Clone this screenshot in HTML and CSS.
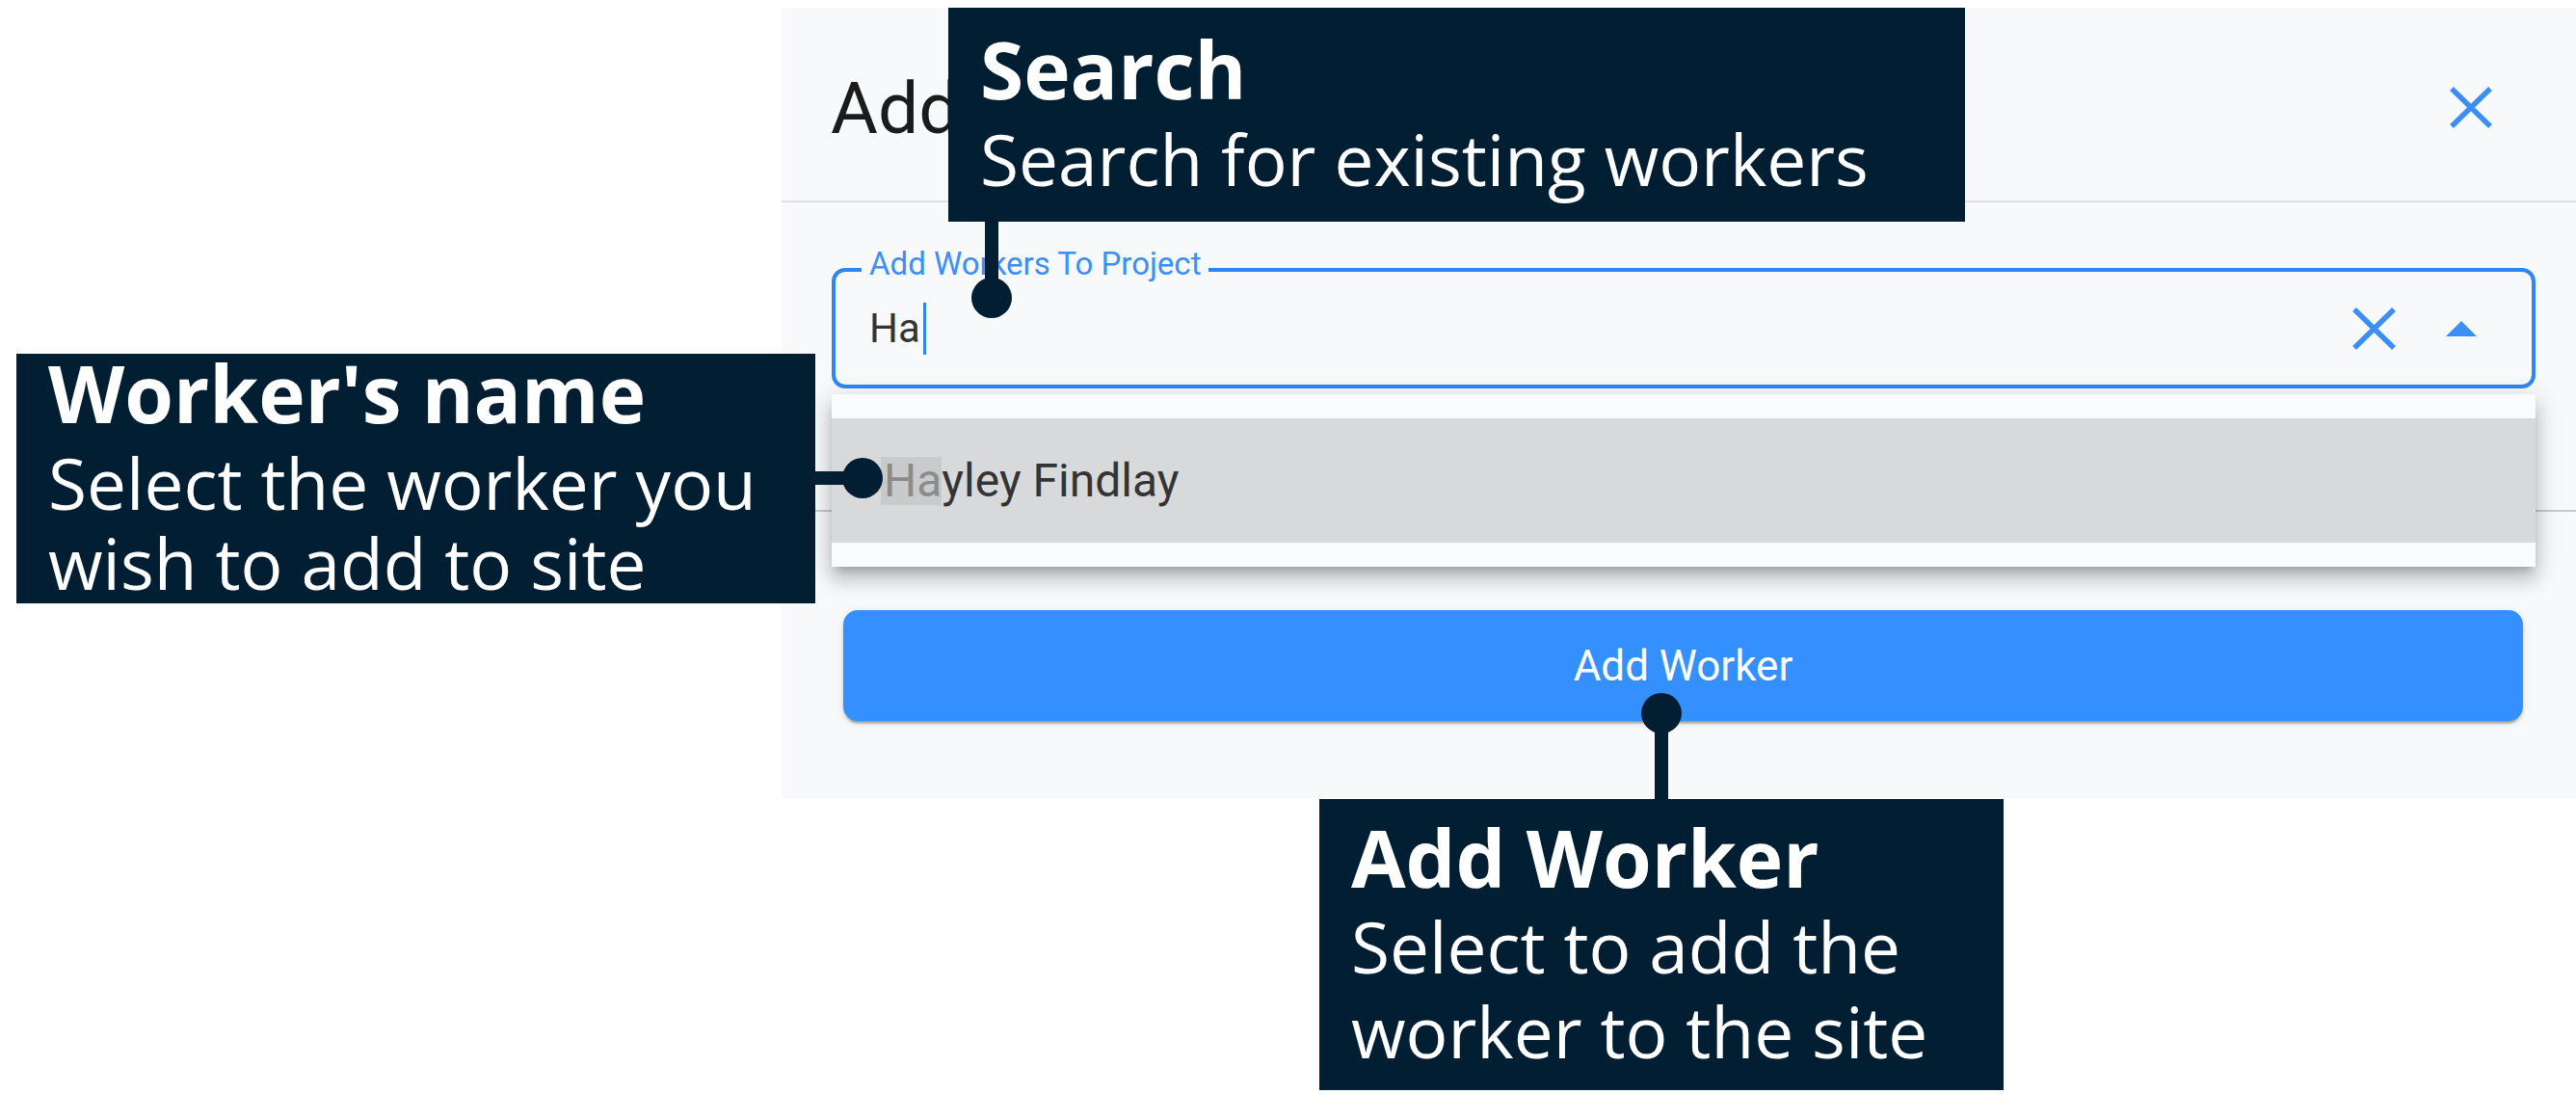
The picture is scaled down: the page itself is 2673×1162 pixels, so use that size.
FILE: index.html
```html
<!DOCTYPE html>
<html lang="en">
<head>
<meta charset="utf-8">
<title>Add Worker</title>
<link rel="stylesheet" href="styles.css">
</head>
<body>
<div class="stage">
  <section class="panel">
    <header class="panel-head">
      <h2 class="panel-title">Add Worker</h2>
      <button class="icon-btn" aria-label="Close">
        <svg class="close-icon" width="46" height="45" viewBox="0 0 46 45"><path d="M3 3 L43 42 M43 3 L3 42" stroke="#3a8ef6" stroke-width="5.5" fill="none"/></svg>
      </button>
    </header>
    <div class="field-section">
      <div class="field">
        <span class="field-label">Add Workers To Project</span>
        <div class="field-value">Ha<span class="caret"></span></div>
        <div class="field-icons">
          <svg width="47" height="44" viewBox="0 0 47 44"><path d="M3 2 L44 42 M44 2 L3 42" stroke="#3a8ef6" stroke-width="5.5" fill="none"/></svg>
          <svg width="32" height="16" viewBox="0 0 32 16"><polygon points="0,16 16,0 32,16" fill="#3a8ef6"/></svg>
        </div>
        <ul class="listbox">
          <li class="option"><span class="match">Ha</span>yley Findlay</li>
        </ul>
      </div>
    </div>
    <div class="divider"></div>
    <div class="action-section">
      <button class="primary-btn">Add Worker</button>
    </div>
  </section>

  <div class="callout callout-search">
    <div class="callout-title">Search</div>
    <div class="callout-text">Search for existing workers</div>
  </div>
  <div class="connector conn-search"></div>
  <div class="dot dot-search"></div>

  <div class="callout callout-name">
    <div class="callout-title">Worker's name</div>
    <div class="callout-text">Select the worker you<br>wish to add to site</div>
  </div>
  <div class="connector conn-name"></div>
  <div class="dot dot-name"></div>

  <div class="callout callout-add">
    <div class="callout-title">Add Worker</div>
    <div class="callout-text">Select to add the<br>worker to the site</div>
  </div>
  <div class="connector conn-add"></div>
  <div class="dot dot-add"></div>
</div>
</body>
</html>
```
FILE: styles.css
```css
* { box-sizing: border-box; }
html, body { margin: 0; padding: 0; background: #ffffff; }
body { width: 2673px; height: 1162px; overflow: hidden; font-family: Roboto, "Liberation Sans", sans-serif; }

.stage { position: relative; width: 2673px; height: 1162px; padding-top: 8px; }

.panel {
  margin-left: 811px;
  width: 1862px;
  height: 820px;
  background: #f8f9fb;
  display: flex;
  flex-direction: column;
}

.panel-head {
  height: 202px;
  padding: 7px 86px 0 51px;
  border-bottom: 2px solid #dfe0e3;
  display: flex;
  align-items: center;
  justify-content: space-between;
}
.panel-title {
  margin: 0;
  font: 400 75px/88px Roboto, sans-serif;
  color: #1b1b1b;
  white-space: nowrap;
}
.icon-btn { border: 0; background: none; padding: 0; display: flex; }

.field-section { padding: 68px 42px 126px 52px; }
.field {
  position: relative;
  height: 125px;
  border: 4px solid #2f86f3;
  border-radius: 14px;
  display: flex;
  align-items: center;
  padding: 0 57px 0 35px;
}
.field-label {
  position: absolute;
  top: -25px;
  left: 27px;
  padding: 0 8px;
  background: #f8f9fb;
  font: 400 33px/33px Roboto, sans-serif;
  color: #3c8ff4;
  white-space: nowrap;
}
.field-value {
  flex: 1;
  display: flex;
  align-items: center;
  font: 400 42px/49px Roboto, sans-serif;
  color: #333333;
}
.caret { display: inline-block; width: 3px; height: 54px; margin-left: 3px; background: #2f86f3; }
.field-icons { display: flex; align-items: center; gap: 51px; }

.listbox {
  position: absolute;
  top: 127px;
  left: -4px;
  right: -4px;
  margin: 0;
  padding: 25px 0;
  list-style: none;
  background: #fafbfc;
  z-index: 2;
  box-shadow: 0 8px 9px -5px rgba(0,0,0,.2), 0 14px 17px 2px rgba(0,0,0,.14), 0 5px 24px 3px rgba(0,0,0,.12);
}
.option {
  height: 129px;
  display: flex;
  align-items: center;
  padding-left: 51px;
  background: #d8d9db;
  font: 400 48px/56px Roboto, sans-serif;
  color: #343434;
}
.match {
  display: inline-block;
  line-height: 50px;
  padding-left: 3px;
  background: #c9cacc;
  color: #8b8b8b;
}

.divider { height: 2px; background: #c9cacc; }

.action-section { padding: 102px 55px 0 64px; }
.primary-btn {
  width: 100%;
  height: 115px;
  border: 0;
  border-radius: 15px;
  background: #3390fe;
  color: #ffffff;
  font: 400 44px/52px Roboto, sans-serif;
  box-shadow: 0 5px 2px -3px rgba(90,60,20,.35), 0 3px 3px rgba(0,0,0,.12), 0 2px 8px rgba(0,0,0,.1);
}

/* annotations */
.callout {
  position: absolute;
  background: #021e33;
  color: #ffffff;
  font-family: "Open Sans", "Liberation Sans", sans-serif;
  padding: 0 33px;
  z-index: 5;
}
.callout-title { font-weight: 700; font-size: 82px; line-height: 80px; white-space: nowrap; }
.callout-text { font-weight: 400; font-size: 73px; line-height: 84px; white-space: nowrap; }

.callout-search { left: 984px; top: 8px; width: 1055px; height: 222px; padding-top: 23px; }
.callout-search .callout-text { margin-top: 12px; }

.callout-name { left: 17px; top: 367px; width: 829px; height: 259px; padding-top: 0; }
.callout-name .callout-text { margin-top: 12px; line-height: 83px; }

.callout-add { left: 1369px; top: 829px; width: 710px; height: 302px; padding-top: 20px; }
.callout-add .callout-text { margin-top: 9px; line-height: 88px; }

.connector { position: absolute; background: #021e33; z-index: 6; }
.dot { position: absolute; width: 42px; height: 42px; border-radius: 50%; background: #021e33; z-index: 6; }

.conn-search { left: 1022px; top: 228px; width: 14px; height: 82px; }
.dot-search { left: 1008px; top: 288px; }

.conn-name { left: 844px; top: 489px; width: 52px; height: 14px; }
.dot-name { left: 874px; top: 475px; }

.conn-add { left: 1717px; top: 740px; width: 14px; height: 91px; }
.dot-add { left: 1703px; top: 719px; }
```
